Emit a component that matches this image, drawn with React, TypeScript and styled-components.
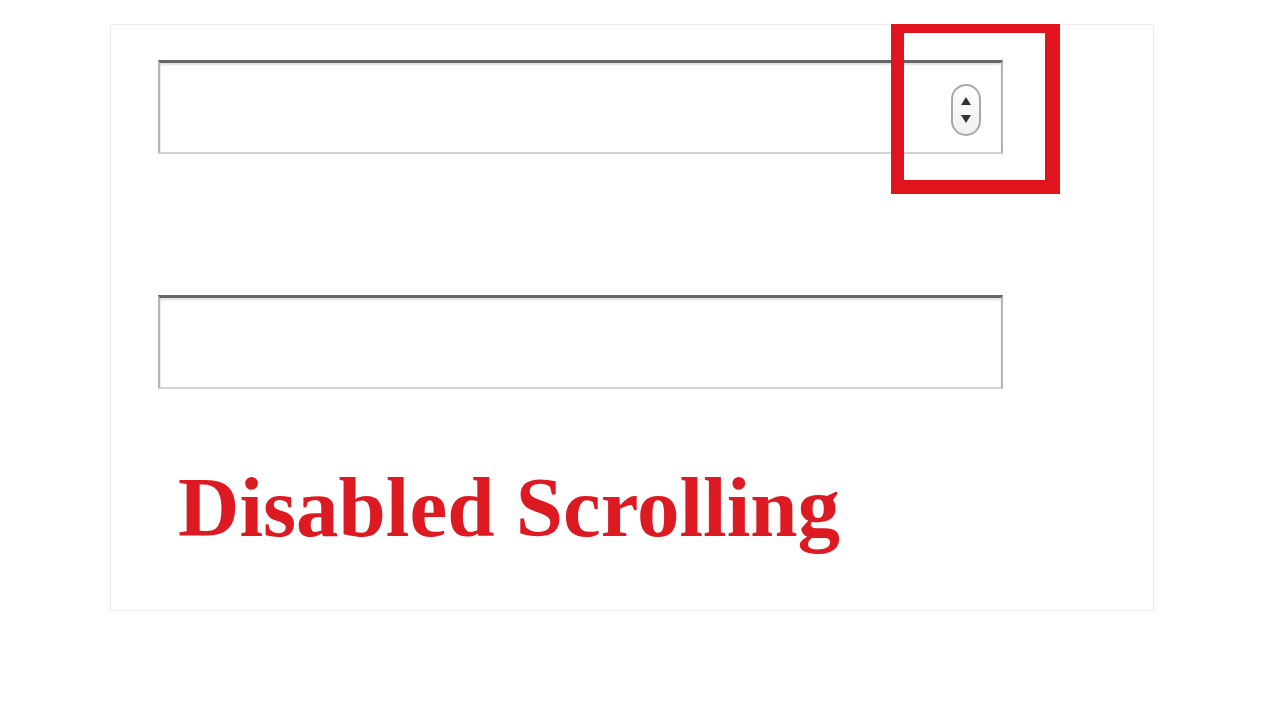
import styled, { createGlobalStyle } from 'styled-components'

const GlobalStyle = createGlobalStyle`
    html, body {
        margin: 0;
        padding: 0;
        background: #ffffff;
    }
`

const Page = styled.main`
    width: 1280px;
    height: 720px;
    padding: 24px 0 0 110px;
    box-sizing: border-box;
`
const Frame = styled.section`
    position: relative;
    width: 1044px;
    height: 587px;
    box-sizing: border-box;
    border: 1px solid #ececec;
    padding: 35px 0 0 47px;
    display: flex;
    flex-direction: column;
`
const Field = styled.div<{ $gap?: number }>`
    width: 845px;
    height: 94px;
    box-sizing: border-box;
    margin-top: ${p => p.$gap ?? 0}px;
    border-top: 3px solid #666666;
    border-left: 2px solid #b4b4b4;
    border-right: 2px solid #b4b4b4;
    border-bottom: 2px solid #d2d2d2;
    box-shadow: inset 0 2px 2px rgba(0, 0, 0, 0.12), inset 1px 0 1px rgba(0, 0, 0, 0.05);
    background: #ffffff;
    display: flex;
    align-items: center;
    justify-content: flex-end;
    padding: 4px 20px 0 0;
`
const Spinner = styled.div`
    width: 30px;
    height: 52px;
    box-sizing: border-box;
    border: 2px solid #a8a8a8;
    border-radius: 15px;
    background: linear-gradient(#ffffff, #f0f0f0);
    display: flex;
    flex-direction: column;
    align-items: center;
    justify-content: center;
    gap: 10px;
`
const Arrow = styled.div<{ $down?: boolean }>`
    width: 0;
    height: 0;
    border-left: 5px solid transparent;
    border-right: 5px solid transparent;
    ${p => p.$down
        ? 'border-top: 8px solid #333333;'
        : 'border-bottom: 8px solid #333333;'}
`
const Title = styled.h1`
    margin: 76px 0 0 20px;
    font-family: "Liberation Serif", "Times New Roman", serif;
    font-weight: 700;
    font-size: 85px;
    line-height: 1;
    color: #dd1a22;
    letter-spacing: 0;
`
const Highlight = styled.div`
    position: absolute;
    left: 780px;
    top: -1px;
    width: 169px;
    height: 170px;
    box-sizing: border-box;
    border-style: solid;
    border-color: #e1141d;
    border-width: 9px 15px 14px 13px;
`

const App = () => {
    return (
        <>
            <GlobalStyle />
            <Page>
                <Frame>
                    <Field>
                        <Spinner>
                            <Arrow />
                            <Arrow $down />
                        </Spinner>
                    </Field>
                    <Field $gap={141} />
                    <Title>Disabled Scrolling</Title>
                    <Highlight />
                </Frame>
            </Page>
        </>
    )
}

export default App
